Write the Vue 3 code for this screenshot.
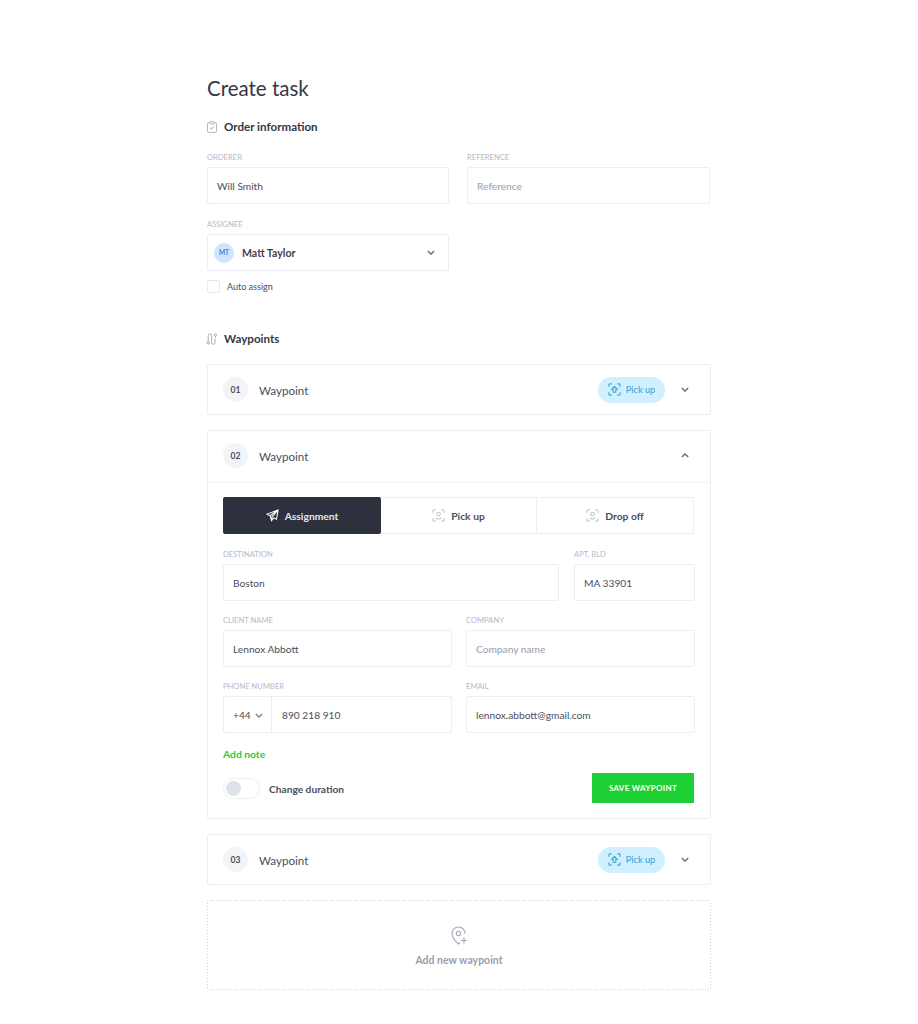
<template>
  <main class="page">
    <h1 class="page-title">Create task</h1>

    <h2 class="section-title">
      <svg class="section-icon" viewBox="0 0 12 12" width="12" height="12" fill="none" stroke="#a9adbd" stroke-width="0.9">
        <rect x="1.5" y="1.8" width="9" height="9.6" rx="1" />
        <rect x="4" y="0.6" width="4" height="2.2" rx="0.5" fill="#fff" />
        <path d="M4.2 6.8l1.3 1.3 2.3-2.4" stroke="#8d91a3" />
      </svg>
      Order information
    </h2>

    <div class="order-grid">
      <label class="field">
        <span class="field-label">ORDERER</span>
        <div class="input">Will Smith</div>
      </label>
      <label class="field">
        <span class="field-label">REFERENCE</span>
        <div class="input placeholder">Reference</div>
      </label>
      <label class="field">
        <span class="field-label">ASSIGNEE</span>
        <div class="input assignee">
          <span class="avatar">MT</span>
          <span class="assignee-name">Matt Taylor</span>
          <svg class="chevron" viewBox="0 0 10 6" width="8" height="5" fill="none" stroke="#6d7080" stroke-width="1.8">
            <path d="M1 1l4 4 4-4" />
          </svg>
        </div>
      </label>
    </div>

    <div class="auto-assign">
      <span class="checkbox"></span>
      <span>Auto assign</span>
    </div>

    <h2 class="section-title waypoints-title">
      <svg class="section-icon" viewBox="0 0 12 12" width="12" height="12" fill="none" stroke="#a9adbd" stroke-width="1">
        <circle cx="2.2" cy="10" r="1.2" />
        <circle cx="9.4" cy="2" r="1.2" />
        <path d="M2.2 8.8V2.6a1.7 1.7 0 0 1 3.4 0v7a1.7 1.7 0 0 0 3.4 0V6M9.4 3.2v2" />
      </svg>
      Waypoints
    </h2>

    <section class="card">
      <div class="waypoint-head">
        <span class="number">01</span>
        <span class="waypoint-name">Waypoint</span>
        <span class="chip">
          <svg viewBox="0 0 14 14" width="13" height="13" fill="none" stroke="#37a9d6" stroke-width="1.2">
            <path d="M1 4V1.800A.8.8 0 0 1 1.800 1H4M10 1h2.200a.8.8 0 0 1 .8.8V4M13 10v2.200a.8.8 0 0 1-.8.8H10M4 13H1.800a.8.8 0 0 1-.8-.8V10" />
            <path d="M7 3.600L10 6.800H8.400V10H5.600V6.800H4z" />
          </svg>
          Pick up
        </span>
        <svg class="chevron" viewBox="0 0 10 6" width="8" height="5" fill="none" stroke="#6d7080" stroke-width="1.8">
          <path d="M1 1l4 4 4-4" />
        </svg>
      </div>
    </section>

    <section class="card">
      <div class="waypoint-head open">
        <span class="number">02</span>
        <span class="waypoint-name">Waypoint</span>
        <svg class="chevron" viewBox="0 0 10 6" width="8" height="5" fill="none" stroke="#6d7080" stroke-width="1.8">
          <path d="M1 5l4-4 4 4" />
        </svg>
      </div>

      <div class="waypoint-body">
        <div class="tabs">
          <div v-for="tab in tabs" :key="tab.label" class="tab" :class="{ active: tab.active }">
            <svg v-if="tab.active" viewBox="0 0 14 14" width="13" height="13" fill="none" stroke="#fff" stroke-width="1.1">
              <path d="M13 1L1 5.500l3.500 1.800L6 12.500l2.300-3 3 1.500zM13 1L4.500 7.300M6 12.500l.4-3.800L13 1" />
            </svg>
            <svg v-else viewBox="0 0 14 14" width="13" height="13" fill="none" stroke="#b4b7c4" stroke-width="1">
              <path d="M1 4V1.800A.8.8 0 0 1 1.800 1H4M10 1h2.200a.8.8 0 0 1 .8.8V4M13 10v2.200a.8.8 0 0 1-.8.8H10M4 13H1.800a.8.8 0 0 1-.8-.8V10" />
              <circle cx="7" cy="5.500" r="2" />
              <path d="M4 9.800c1.500 1.300 4.500 1.300 6 0" />
            </svg>
            <span class="tab-label">{{ tab.label }}</span>
          </div>
        </div>

        <div class="row row-destination">
          <label class="field">
            <span class="field-label">DESTINATION</span>
            <div class="input">Boston</div>
          </label>
          <label class="field">
            <span class="field-label">APT, BLD</span>
            <div class="input">MA 33901</div>
          </label>
        </div>

        <div class="row">
          <label class="field">
            <span class="field-label">CLIENT NAME</span>
            <div class="input">Lennox Abbott</div>
          </label>
          <label class="field">
            <span class="field-label">COMPANY</span>
            <div class="input placeholder">Company name</div>
          </label>
        </div>

        <div class="row">
          <label class="field">
            <span class="field-label">PHONE NUMBER</span>
            <div class="input phone">
              <span class="phone-code">
                +44
                <svg viewBox="0 0 10 6" width="8" height="5" fill="none" stroke="#6d7080" stroke-width="1.6">
                  <path d="M1 1l4 4 4-4" />
                </svg>
              </span>
              <span class="phone-number">890 218 910</span>
            </div>
          </label>
          <label class="field">
            <span class="field-label">EMAIL</span>
            <div class="input">lennox.abbott@gmail.com</div>
          </label>
        </div>

        <a class="add-note">Add note</a>

        <div class="waypoint-foot">
          <div class="duration">
            <span class="toggle"><span class="knob"></span></span>
            <span class="duration-label">Change duration</span>
          </div>
          <button class="save-btn" type="button">SAVE WAYPOINT</button>
        </div>
      </div>
    </section>

    <section class="card">
      <div class="waypoint-head">
        <span class="number">03</span>
        <span class="waypoint-name">Waypoint</span>
        <span class="chip">
          <svg viewBox="0 0 14 14" width="13" height="13" fill="none" stroke="#37a9d6" stroke-width="1.2">
            <path d="M1 4V1.800A.8.8 0 0 1 1.800 1H4M10 1h2.200a.8.8 0 0 1 .8.8V4M13 10v2.200a.8.8 0 0 1-.8.8H10M4 13H1.800a.8.8 0 0 1-.8-.8V10" />
            <path d="M7 3.600L10 6.800H8.400V10H5.600V6.800H4z" />
          </svg>
          Pick up
        </span>
        <svg class="chevron" viewBox="0 0 10 6" width="8" height="5" fill="none" stroke="#6d7080" stroke-width="1.8">
          <path d="M1 1l4 4 4-4" />
        </svg>
      </div>
    </section>

    <button class="add-waypoint" type="button">
      <svg viewBox="0 0 18 20" width="18" height="20" fill="none" stroke="#a3a6b8" stroke-width="1.1">
        <path d="M15 7.500C15 3.600 12.200 1 8.500 1S2 3.800 2 7.500c0 4 3.500 7.800 6.500 10.500l1.500-1.400" />
        <circle cx="8.500" cy="7.500" r="2.200" />
        <path d="M14 11.500v6M11 14.500h6" />
      </svg>
      <span>Add new waypoint</span>
    </button>
  </main>
</template>

<script setup>
const tabs = [
  { label: 'Assignment', active: true },
  { label: 'Pick up', active: false },
  { label: 'Drop off', active: false },
]
</script>

<style>
body {
  background: #fff;
}
</style>

<style scoped>
.page {
  box-sizing: border-box;
  width: 504px;
  margin-left: 207px;
  padding: 74px 0 34px;
  font-family: Lato, "Liberation Sans", sans-serif;
  color: #3f4250;
}

.page-title {
  margin: 0;
  font-size: 20.5px;
  line-height: 28px;
  font-weight: 400;
  color: #343744;
}

.section-title {
  display: flex;
  align-items: center;
  gap: 6px;
  margin: 16px 0 0;
  font-size: 11.6px;
  line-height: 18px;
  font-weight: 700;
  color: #343744;
}

.section-icon {
  flex-shrink: 0;
  margin-left: -1px;
}

.order-grid {
  display: grid;
  grid-template-columns: 242px 243px;
  column-gap: 18px;
  row-gap: 15px;
  margin-top: 16px;
}

.field {
  display: block;
  min-width: 0;
}

.field-label {
  display: block;
  height: 12px;
  margin-bottom: 3px;
  font-size: 7.6px;
  line-height: 11px;
  color: #b6b9c6;
}

.input {
  box-sizing: border-box;
  display: flex;
  align-items: center;
  height: 37px;
  padding: 1px 9px 0;
  border: 1px solid #eceef3;
  border-radius: 2px;
  background: #fff;
  font-size: 10.2px;
  color: #4b4e5c;
}

.placeholder {
  color: #9a9dae;
}

.assignee {
  padding: 0 13px 0 6px;
}

.avatar {
  display: flex;
  align-items: center;
  justify-content: center;
  width: 20px;
  height: 20px;
  border-radius: 50%;
  background: #cfe5ff;
  color: #4a7fd0;
  font-size: 6.5px;
  font-weight: 700;
}

.assignee-name {
  flex: 1;
  margin-left: 8px;
  padding-top: 1px;
  font-size: 10.6px;
  font-weight: 700;
  color: #3f4250;
}

.chevron {
  flex-shrink: 0;
}

.auto-assign {
  display: flex;
  align-items: center;
  gap: 7px;
  margin-top: 9px;
  font-size: 9px;
  line-height: 13px;
  color: #4b4e5c;
}

.checkbox {
  box-sizing: border-box;
  width: 13px;
  height: 13px;
  border: 1px solid #e6e8ee;
  border-radius: 2px;
}

.waypoints-title {
  margin-top: 37px;
}

.card {
  margin-top: 15px;
  border: 1px solid #eceef3;
  border-radius: 2px;
  background: #fff;
}

.waypoints-title + .card {
  margin-top: 16px;
}

.waypoint-head {
  box-sizing: border-box;
  display: flex;
  align-items: center;
  height: 49px;
  padding: 0 21px 0 15px;
}

.waypoint-head.open {
  height: 52px;
  padding-bottom: 2px;
  border-bottom: 1px solid #f2f3f7;
}

.number {
  display: flex;
  align-items: center;
  justify-content: center;
  width: 25px;
  height: 25px;
  border-radius: 50%;
  background: #f3f4f8;
  font-size: 8.5px;
  font-weight: 700;
  color: #4b4e5c;
}

.waypoint-name {
  flex: 1;
  margin-left: 11px;
  padding-top: 1px;
  font-size: 11.6px;
  color: #4b4e5c;
}

.chip {
  display: flex;
  align-items: center;
  justify-content: center;
  gap: 5px;
  width: 67px;
  height: 26px;
  margin-right: 16px;
  border-radius: 13px;
  background: #d0f0ff;
  color: #37a9d6;
  font-size: 9.2px;
  font-weight: 500;
}

.waypoint-body {
  padding: 14px 15px 15px;
}

.tabs {
  display: grid;
  grid-template-columns: 158px 156px 157px;
  width: 471px;
  height: 37px;
}

.tab {
  box-sizing: border-box;
  display: flex;
  align-items: center;
  justify-content: center;
  gap: 6px;
  border: 1px solid #eceef3;
  border-left: none;
  font-size: 10.3px;
  font-weight: 700;
  color: #4b4e5c;
}

.tab-label {
  padding-top: 1px;
}

.tab.active {
  border: none;
  border-radius: 2px;
  background: #2d303d;
  color: #e6e7ec;
}

.row {
  display: grid;
  grid-template-columns: 229px 229px;
  column-gap: 14px;
  margin-top: 14px;
}

.row-destination {
  grid-template-columns: 336px 121px;
  column-gap: 15px;
  margin-top: 15px;
}

.phone {
  padding: 0;
}

.phone-code {
  box-sizing: border-box;
  display: flex;
  align-items: center;
  gap: 4px;
  width: 48px;
  height: 100%;
  padding: 1px 0 0 9px;
  border-right: 1px solid #eceef3;
}

.phone-number {
  margin-left: 10px;
  padding-top: 1px;
}

.add-note {
  display: block;
  margin-top: 15px;
  font-size: 10.3px;
  line-height: 13px;
  font-weight: 700;
  color: #22cf3a;
}

.waypoint-foot {
  display: flex;
  align-items: center;
  justify-content: space-between;
  width: 471px;
  margin-top: 12px;
}

.duration {
  display: flex;
  align-items: center;
  gap: 9px;
  font-size: 10.2px;
  font-weight: 700;
  color: #4b4e5c;
}

.duration-label {
  padding-top: 1px;
}

.toggle {
  box-sizing: border-box;
  display: block;
  width: 37px;
  height: 21px;
  padding: 2px;
  border: 1px solid #eceef3;
  border-radius: 11px;
}

.knob {
  display: block;
  width: 15px;
  height: 15px;
  border-radius: 50%;
  background: #dfe1ea;
}

.save-btn {
  width: 102px;
  height: 30px;
  border: none;
  border-radius: 1px;
  background: #1ccf33;
  color: #fff;
  font-family: inherit;
  font-size: 8px;
  font-weight: 700;
  letter-spacing: 0.3px;
}

.add-waypoint {
  box-sizing: border-box;
  display: flex;
  flex-direction: column;
  align-items: center;
  justify-content: center;
  gap: 8px;
  width: 504px;
  height: 90px;
  margin-top: 15px;
  padding-top: 2px;
  border: none;
  border-radius: 2px;
  background-color: #fff;
  background-image:
    linear-gradient(to right, #c9cbd6 1px, transparent 1px),
    linear-gradient(to right, #c9cbd6 1px, transparent 1px),
    linear-gradient(to bottom, #c9cbd6 1px, transparent 1px),
    linear-gradient(to bottom, #c9cbd6 1px, transparent 1px);
  background-size: 3px 1px, 3px 1px, 1px 3px, 1px 3px;
  background-position: left top, left bottom, left top, right top;
  background-repeat: repeat-x, repeat-x, repeat-y, repeat-y;
  font-family: inherit;
  font-size: 10.5px;
  font-weight: 700;
  color: #9a9dae;
}
</style>
